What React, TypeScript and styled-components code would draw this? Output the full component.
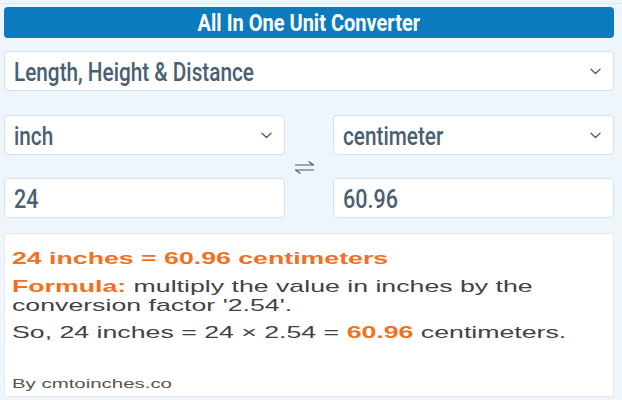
import styled, { createGlobalStyle } from "styled-components";

const GlobalStyle = createGlobalStyle`
  html, body {
    margin: 0;
    padding: 0;
    background: #eef6fb;
  }
  * {
    box-sizing: border-box;
  }
`;

const STRETCH = 1.57;

const Chevron = () => (
  <svg width="11" height="7" viewBox="0 0 11 7" fill="none">
    <path d="M1 1.2l4.5 4.3L10 1.2" stroke="#54687a" strokeWidth="1.5" strokeLinecap="round" strokeLinejoin="round" />
  </svg>
);

const SwapIcon = () => (
  <svg width="21" height="13" viewBox="0 0 21 13" fill="none">
    <path d="M1.5 4h18l-4.5-3.2" stroke="#555" strokeWidth="1.2" strokeLinecap="round" strokeLinejoin="round" />
    <path d="M19.5 9h-18l4.5 3.2" stroke="#555" strokeWidth="1.2" strokeLinecap="round" strokeLinejoin="round" />
  </svg>
);

export default function App() {
  return (
    <>
      <GlobalStyle />
      <Widget>
        <Header>
          <Squeeze $sx={0.87} $origin="center">All In One Unit Converter</Squeeze>
        </Header>

        <Category>
          <Squeeze $sx={0.83}>Length, Height &amp; Distance</Squeeze>
          <Chevron />
        </Category>

        <Converter>
          <Field>
            <Squeeze $sx={0.83}>inch</Squeeze>
            <Chevron />
          </Field>
          <Swap>
            <SwapIcon />
          </Swap>
          <Field>
            <Squeeze $sx={0.83}>centimeter</Squeeze>
            <Chevron />
          </Field>
          <Field>
            <Squeeze $sx={0.86}>24</Squeeze>
          </Field>
          <Field>
            <Squeeze $sx={0.86}>60.96</Squeeze>
          </Field>
        </Converter>

        <Result>
          <Line $sx={STRETCH} $variant="headline">
            24 inches = 60.96 centimeters
          </Line>
          <Line $sx={STRETCH} $variant="body" $gap={8}>
            <Accent>Formula:</Accent> multiply the value in inches by the conversion factor '2.54'.
          </Line>
          <Line $sx={STRETCH} $variant="body" $gap={8}>
            So, 24 inches = 24 × 2.54 = <Accent>60.96</Accent> centimeters.
          </Line>
          <Line $sx={STRETCH} $variant="credit" $gap={34}>
            By cmtoinches.co
          </Line>
        </Result>
      </Widget>
    </>
  );
}

const Widget = styled.div`
  width: 622px;
  height: 400px;
  padding: 3px 8px 0 4px;
  border-top: 1px solid #dbe8f1;
  margin-top: 3px;
  display: flex;
  flex-direction: column;
  overflow: hidden;
`;

const Header = styled.div`
  height: 31px;
  padding-top: 2px;
  line-height: 29px;
  text-align: center;
  background: #0b7bbd;
  border-radius: 4px;
  color: #fff;
  font-family: Roboto, "Liberation Sans", sans-serif;
  font-weight: 700;
  font-size: 23px;
  white-space: nowrap;
`;

const Squeeze = styled.span<{ $sx: number; $origin?: string }>`
  display: inline-block;
  white-space: nowrap;
  transform: scaleX(${(p) => p.$sx});
  transform-origin: ${(p) => p.$origin ?? "left"} center;
`;

const Field = styled.div`
  height: 40px;
  display: flex;
  align-items: center;
  justify-content: space-between;
  padding: 3px 12px 0 9px;
  background: #fff;
  border: 1px solid #d3e2ec;
  border-radius: 4px;
  color: #4a5f72;
  font-family: Roboto, "Liberation Sans", sans-serif;
  font-weight: 500;
  font-size: 25px;
  line-height: 25px;

  svg {
    margin-top: -3px;
    flex-shrink: 0;
  }
`;

const Category = styled(Field)`
  margin-top: 13px;
`;

const Converter = styled.div`
  margin-top: 24px;
  display: grid;
  grid-template-columns: 281px 1fr 281px;
  grid-template-rows: 40px 40px;
  row-gap: 23px;
`;

const Swap = styled.div`
  grid-row: 1 / span 2;
  grid-column: 2;
  display: flex;
  align-items: center;
  justify-content: center;
  padding: 2px 10px 0 0;
`;

const Result = styled.div`
  margin-top: 15px;
  height: 164px;
  background: #fff;
  border: 1px solid #dfeaf2;
  border-radius: 2px;
  padding: 15px 7px 0;
  font-family: "Liberation Sans", Arial, sans-serif;
  color: #424242;
`;

const variants = {
  headline: "font-size: 17px; line-height: 20px; font-weight: 700; color: #f2701e;",
  body: "font-size: 17px; line-height: 19px;",
  credit: "font-size: 13px; line-height: 15px; color: #555;",
};

const Line = styled.p<{ $sx: number; $variant: keyof typeof variants; $gap?: number }>`
  margin: ${(p) => p.$gap ?? 0}px 0 0;
  width: calc(100% / ${(p) => p.$sx});
  transform: scaleX(${(p) => p.$sx});
  transform-origin: left top;
  ${(p) => variants[p.$variant]}
`;

const Accent = styled.b`
  color: #f2701e;
  font-weight: 700;
`;
